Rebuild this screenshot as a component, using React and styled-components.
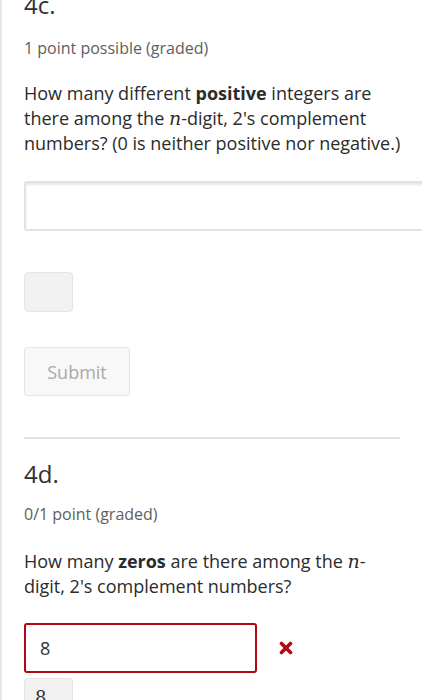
import React from "react";
import styled, { createGlobalStyle } from "styled-components";

const GlobalStyle = createGlobalStyle`
  html, body {
    margin: 0;
    padding: 0;
    background: #fff;
    overflow: hidden;
  }
  body {
    font-family: "Open Sans", "Noto Sans", sans-serif;
    color: #313131;
  }
`;

const Page = styled.div`
  border-left: 2px solid #e6e6e6;
  padding: 0 0 0 22px;
  min-height: 700px;
  box-sizing: border-box;
`;

const Problem = styled.section`
  display: flex;
  flex-direction: column;
  align-items: flex-start;
`;

const Heading = styled.h3`
  margin: ${(p) => p.top}px 0 0;
  font-size: 24px;
  font-weight: 400;
  line-height: 30px;
  color: #313131;
`;

const Points = styled.div`
  margin-top: ${(p) => p.gap}px;
  font-size: 16px;
  line-height: 22px;
  color: #5e5e5e;
`;

const Question = styled.p`
  margin: ${(p) => p.gap}px 0 0;
  font-size: 18px;
  line-height: 25px;
  color: #2b2b2b;
  width: 380px;

  b {
    font-weight: 700;
  }
`;

const MathVar = styled.i`
  font-family: "DejaVu Serif", "Liberation Serif", serif;
  font-style: italic;
  font-size: 19px;
`;

const AnswerRow = styled.div`
  display: flex;
  align-items: center;
  gap: 22px;
  margin-top: ${(p) => p.gap}px;
`;

const Input = styled.div`
  box-sizing: border-box;
  width: ${(p) => p.width}px;
  height: 50px;
  padding: 0 14px;
  display: flex;
  align-items: center;
  font-size: 18px;
  color: #313131;
  background: #fff;
  border: ${(p) => (p.wrong ? "2px solid #b20610" : "2px solid #e3e3e3")};
  border-radius: 3px;
  box-shadow: ${(p) => (p.wrong ? "none" : "inset 0 2px 2px #e8e8e8")};
`;

const Preview = styled.div`
  box-sizing: border-box;
  width: 49px;
  height: 40px;
  margin-top: ${(p) => p.gap}px;
  padding: 8px 0 0 10px;
  background: #f1f1f1;
  border: 1px solid #e4e4e4;
  border-radius: 4px;
  font-family: "DejaVu Serif", "Liberation Serif", serif;
  font-size: 18px;
  line-height: 22px;
  color: #313131;
`;

const SubmitButton = styled.button`
  margin-top: 35px;
  width: 106px;
  height: 49px;
  background: #f8f8f8;
  border: 1px solid #e6e6e6;
  border-radius: 3px;
  font-family: inherit;
  font-size: 18px;
  color: #a9a9a9;
  cursor: default;
`;

const Divider = styled.hr`
  margin: 41px 0 0;
  width: 376px;
  border: none;
  border-top: 2px solid #e2e2e2;
`;

const WrongMark = styled.svg`
  width: 14px;
  height: 14px;
  flex-shrink: 0;
`;

function CloseIcon() {
  return (
    <WrongMark viewBox="0 0 14 14">
      <path
        d="M2.5 2.5 L11.5 11.5 M11.5 2.5 L2.5 11.5"
        stroke="#b20610"
        strokeWidth="3.6"
        strokeLinecap="round"
      />
    </WrongMark>
  );
}

export default function App() {
  return (
    <>
      <GlobalStyle />
      <Page>
        <Problem>
          <Heading top={-10}>4c.</Heading>
          <Points gap={17}>1 point possible (graded)</Points>
          <Question gap={22}>
            How many different <b>positive</b> integers are there among the{" "}
            <MathVar>n</MathVar>-digit, 2's complement numbers? (0 is neither
            positive nor negative.)
          </Question>
          <AnswerRow gap={25}>
            <Input width={420} />
          </AnswerRow>
          <Preview gap={41} />
          <SubmitButton>Submit</SubmitButton>
          <Divider />
        </Problem>
        <Problem>
          <Heading top={20}>4d.</Heading>
          <Points gap={14}>0/1 point (graded)</Points>
          <Question gap={24}>
            How many <b>zeros</b> are there among the <MathVar>n</MathVar>-
            digit, 2's complement numbers?
          </Question>
          <AnswerRow gap={24}>
            <Input width={233} wrong>
              8
            </Input>
            <CloseIcon />
          </AnswerRow>
          <Preview gap={5}>8</Preview>
        </Problem>
      </Page>
    </>
  );
}
